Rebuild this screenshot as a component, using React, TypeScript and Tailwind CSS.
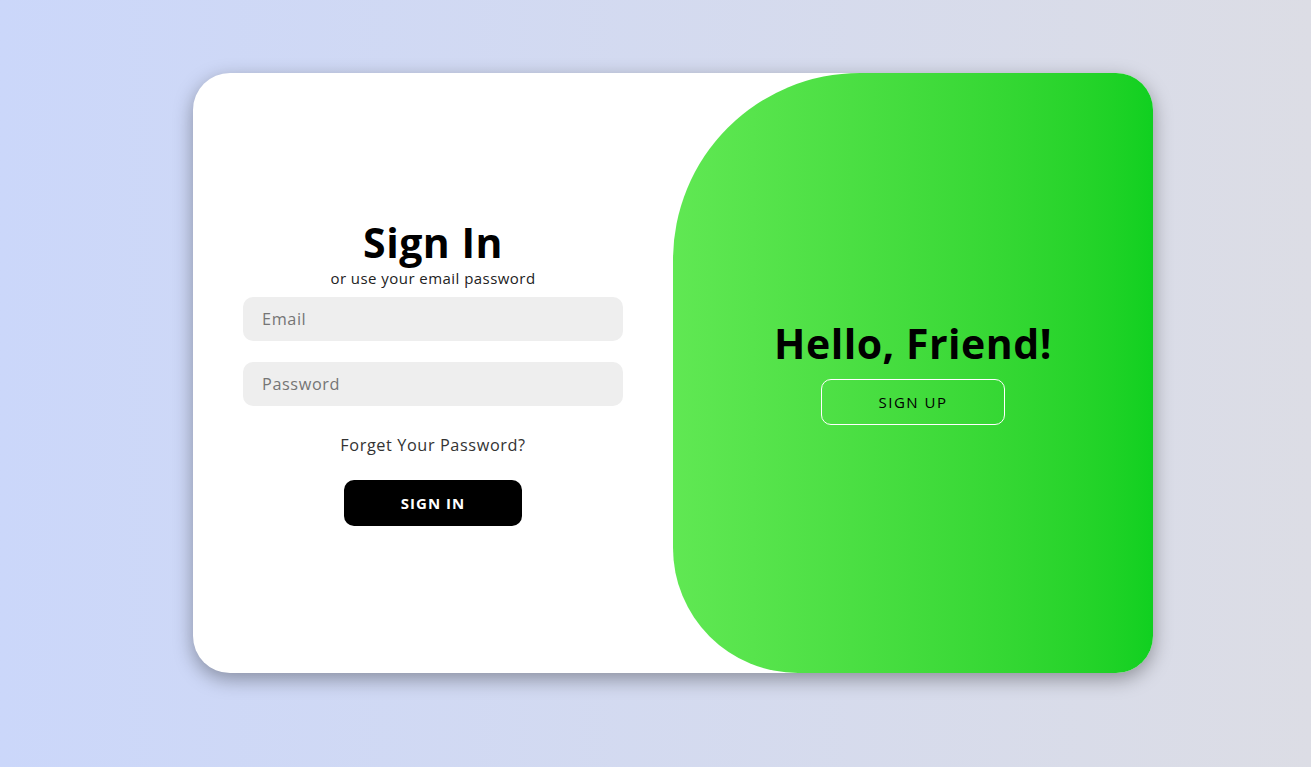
export default function App() {
  return (
    <div
      className="min-h-screen w-full bg-gradient-to-r from-[#cbd7fa] to-[#dcdde5] pt-[73px] pl-[193px]"
      style={{ fontFamily: '"Open Sans", "Liberation Sans", sans-serif' }}
    >
      <div className="flex h-[600px] w-[960px] overflow-hidden rounded-[37px] bg-white shadow-[0_6px_19px_rgba(0,0,0,0.35)]">
        {/* Sign in form */}
        <form
          className="flex h-full w-[480px] flex-col items-center justify-center px-[50px]"
          onSubmit={(e) => e.preventDefault()}
        >
          <h1 className="mb-[4px] text-[41px] font-bold leading-[45px] tracking-[0.5px] text-black">Sign In</h1>
          <span className="text-[15px] leading-[18px] tracking-[0.45px] text-[#222]">or use your email password</span>
          <input
            type="email"
            placeholder="Email"
            className="mt-[10px] h-[44px] w-full rounded-[10px] bg-[#eeeeee] px-[19px] text-[16.25px] tracking-[0.6px] text-[#333] outline-none placeholder:text-[#757575]"
          />
          <input
            type="password"
            placeholder="Password"
            className="mt-[21px] mb-[10px] h-[44px] w-full rounded-[10px] bg-[#eeeeee] px-[19px] text-[16.25px] tracking-[0.6px] text-[#333] outline-none placeholder:text-[#757575]"
          />
          <a href="#" className="mt-[19px] mb-[12px] text-[16.25px] leading-[20px] tracking-[0.6px] text-[#333]">
            Forget Your Password?
          </a>
          <button
            type="submit"
            className="mt-[13px] h-[46px] w-[178px] rounded-[10px] bg-black text-[15px] font-bold tracking-[1px] text-white uppercase"
          >
            Sign In
          </button>
        </form>

        {/* Toggle panel */}
        <div className="flex h-full w-[480px] flex-col items-center justify-center rounded-[187px_0_0_125px] bg-gradient-to-r from-[#60e853] to-[#10d020]">
          <h1 className="mt-[-2px] text-[41px] font-bold leading-[49px] tracking-[0.5px] text-black">Hello, Friend!</h1>
          <button
            type="button"
            className="mt-[11px] h-[46px] w-[184px] rounded-[10px] border border-white bg-transparent text-[15px] font-medium tracking-[1.5px] text-black uppercase"
          >
            Sign Up
          </button>
        </div>
      </div>
    </div>
  );
}
